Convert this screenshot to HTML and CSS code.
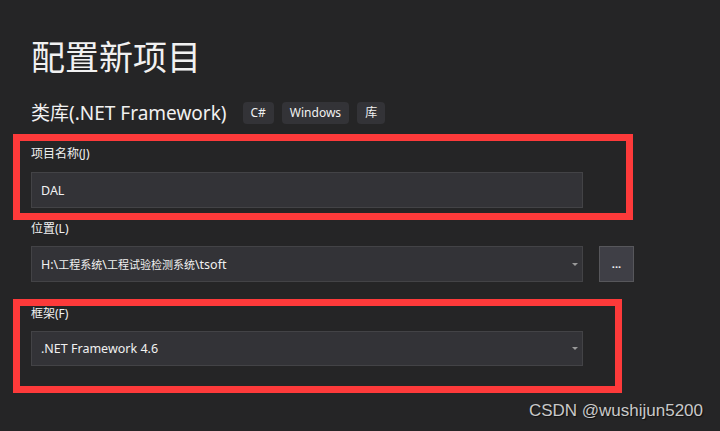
FILE: index.html
```html
<!DOCTYPE html>
<html lang="zh">
<head>
<meta charset="utf-8">
<title>配置新项目</title>
<link rel="stylesheet" href="styles.css">
</head>
<body>
<div class="page">
  <h1 class="title">配置新项目</h1>
  <div class="subrow">
    <span class="subtitle">类库(.NET Framework)</span>
    <span class="tag">C#</span>
    <span class="tag">Windows</span>
    <span class="tag">库</span>
  </div>
  <section class="mark mark-name">
    <div class="label">项目名称(J)</div>
    <div class="field field-name"><span class="value">DAL</span></div>
  </section>
  <div class="plain">
    <div class="label label-loc">位置(L)</div>
    <div class="locrow">
      <div class="field field-loc"><span class="value">H:\<span class="cjk">工程系统</span>\<span class="cjk">工程试验检测系统</span>\tsoft</span><span class="arrow"></span></div>
      <div class="browse">...</div>
    </div>
  </div>
  <section class="mark mark-fw">
    <div class="label">框架(F)</div>
    <div class="field field-fw"><span class="value">.NET Framework 4.6</span><span class="arrow"></span></div>
  </section>
  <div class="watermark">CSDN @wushijun5200</div>
</div>
</body>
</html>
```
FILE: styles.css
```css
html, body {
  margin: 0;
  padding: 0;
  background: #252526;
  height: 100%;
}
.page {
  position: relative;
  height: 431px;
  box-sizing: border-box;
  padding: 36px 0 0 13px;
  font-family: "Noto Sans", "Noto Sans CJK SC", sans-serif;
  color: #f1f1f1;
  overflow: hidden;
}
.title {
  margin: 0 0 0 18px;
  font-family: "Noto Sans CJK SC", sans-serif;
  font-weight: 400;
  font-size: 34px;
  line-height: 40px;
  color: #f1f1f1;
}
.subrow {
  margin: 26px 0 0 18px;
  height: 22px;
  display: flex;
  align-items: center;
}
.subtitle {
  font-size: 19px;
  line-height: 22px;
  margin-right: 16px;
  color: #f1f1f1;
}
.tag {
  height: 22px;
  line-height: 22px;
  padding: 0 8px;
  margin-right: 8px;
  border-radius: 4px;
  background: #333337;
  font-size: 12px;
  color: #f1f1f1;
}
.mark {
  border: 7px solid #fd3a3a;
  box-sizing: border-box;
  padding-left: 11px;
}
.mark-name {
  margin-top: 10px;
  width: 620px;
  padding-top: 5px;
  padding-bottom: 5px;
}
.mark-fw {
  margin-top: 17px;
  width: 609px;
  padding-top: 0;
  padding-bottom: 20px;
}
.label {
  font-size: 12px;
  line-height: 16px;
  color: #f1f1f1;
}
.plain {
  margin-left: 18px;
}
.label-loc {
  margin-top: 1px;
}
.field {
  box-sizing: border-box;
  width: 552px;
  height: 36px;
  background: #333337;
  border: 1px solid #434346;
  display: flex;
  align-items: center;
  justify-content: space-between;
  padding: 0 4px 0 9px;
  font-size: 12.5px;
  color: #f1f1f1;
}
.cjk {
  font-size: 11px;
}
.field-name { margin-top: 10px; }
.field-fw { margin-top: 9px; height: 35px; }
.locrow {
  margin-top: 9px;
  display: flex;
  gap: 16px;
}
.arrow {
  width: 0;
  height: 0;
  border-left: 3px solid transparent;
  border-right: 3px solid transparent;
  border-top: 3px solid #9a9a9a;
}
.browse {
  box-sizing: border-box;
  width: 35px;
  height: 36px;
  background: #3f3f46;
  border: 1px solid #57575b;
  display: flex;
  align-items: center;
  justify-content: center;
  font-size: 11px;
  font-weight: 700;
  color: #f1f1f1;
  padding-bottom: 2px;
}
.watermark {
  position: absolute;
  right: 17px;
  bottom: 10px;
  font-family: "Liberation Sans", Arial, sans-serif;
  font-size: 17px;
  line-height: 20px;
  color: #c9c9c9;
  text-shadow: 1px 1px 1px #111;
}
```
